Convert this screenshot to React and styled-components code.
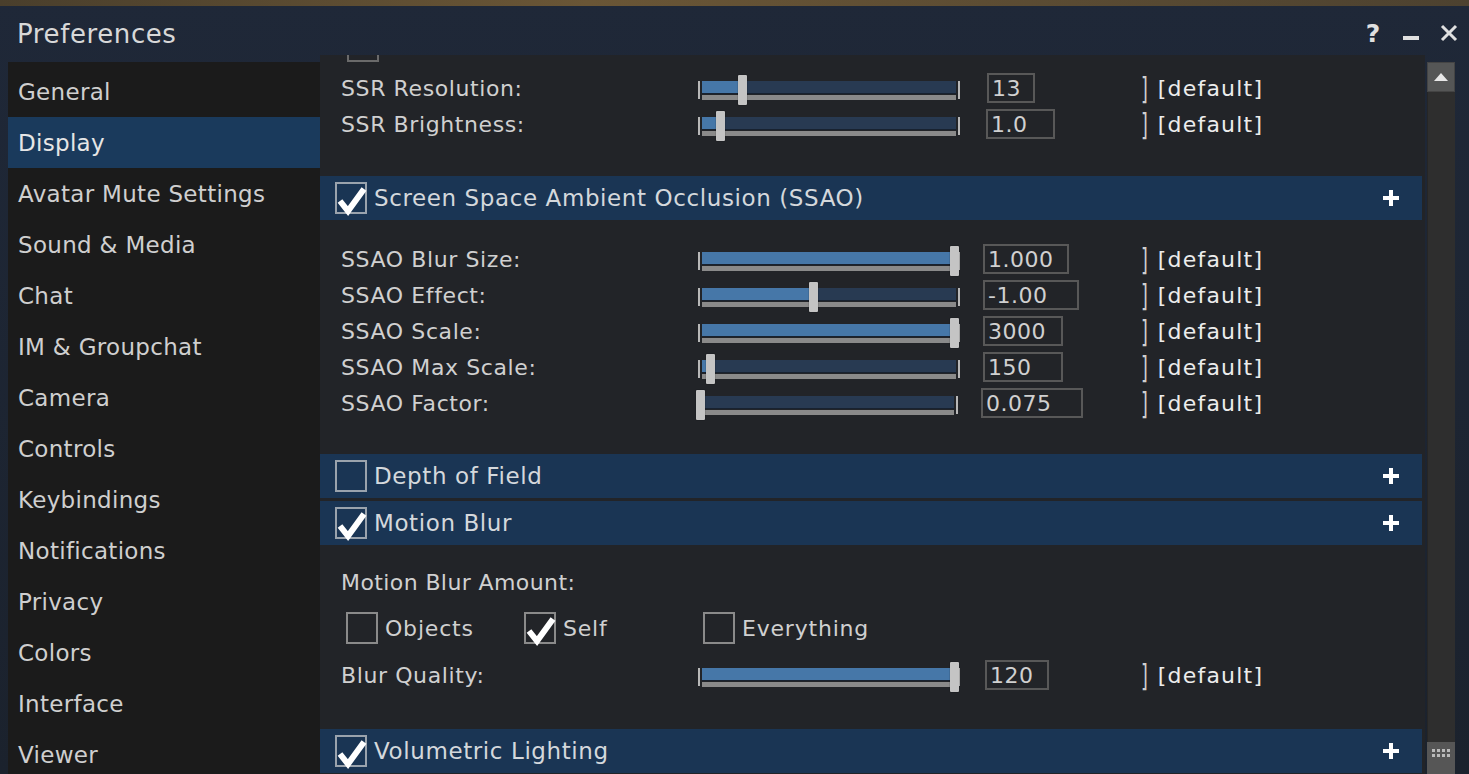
import React from "react";
import styled, { createGlobalStyle } from "styled-components";

const GlobalStyle = createGlobalStyle`
    html, body {
        margin: 0;
        padding: 0;
        background: #1d2430;
        overflow: hidden;
    }
    * {
        box-sizing: border-box;
    }
`;

const Window = styled.div`
    width: 1469px;
    height: 774px;
    display: flex;
    flex-direction: column;
    background: linear-gradient(180deg, #1f2838 0%, #1b222d 100%);
    font-family: "DejaVu Sans", "Liberation Sans", sans-serif;
    color: #d2d2d2;
    overflow: hidden;
`;

const TopStrip = styled.div`
    height: 6px;
    background: linear-gradient(90deg, #4a3f2c, #6a5636 40%, #4d4230);
    flex-shrink: 0;
`;

const TitleBar = styled.div`
    height: 54px;
    display: flex;
    align-items: center;
    padding: 0 0 0 17px;
    flex-shrink: 0;
`;

const Title = styled.div`
    font-size: 26px;
    letter-spacing: 0.6px;
    color: #d8d8d8;
    flex: 1;
    padding-top: 2px;
`;

const TitleButtons = styled.div`
    display: flex;
    align-items: center;
    gap: 14px;
    padding-right: 8px;
`;

const TitleButton = styled.div`
    width: 24px;
    height: 30px;
    display: flex;
    align-items: center;
    justify-content: center;
    color: #e0e0e0;
    font-weight: bold;
    font-size: 25px;
`;

const Body = styled.div`
    flex: 1;
    display: flex;
    padding-left: 8px;
    min-height: 0;
`;

const Sidebar = styled.div`
    width: 312px;
    background: #1b1b1b;
    padding-top: 4px;
    margin-top: 2px;
    display: flex;
    flex-direction: column;
`;

const NavItem = styled.div`
    height: 51px;
    flex-shrink: 0;
    display: flex;
    align-items: center;
    padding-left: 10px;
    font-size: 23px;
    letter-spacing: 0.3px;
    color: ${props => (props.active ? "#e6e6e6" : "#cfcfcf")};
    background: ${props => (props.active ? "#1a3a5c" : "transparent")};
`;

const Content = styled.div`
    flex: 1;
    background: #222428;
    overflow: hidden;
    margin-top: -5px;
`;

const Inner = styled.div`
    display: flex;
    flex-direction: column;
    padding-right: 3px;
`;

const Stub = styled.div`
    height: 17px;
    margin-left: 27px;
    width: 32px;
    border-left: 2px solid #6a6a6a;
    border-right: 2px solid #6a6a6a;
    border-bottom: 2px solid #6a6a6a;
    margin-top: -10px;
    margin-bottom: 8px;
    flex-shrink: 0;
`;

const Group = styled.div`
    display: flex;
    flex-direction: column;
    padding: ${props => props.pad || "0"};
`;

const Row = styled.div`
    height: 36px;
    display: flex;
    align-items: center;
    padding-left: 21px;
    margin-top: ${props => props.top || 0}px;
    flex-shrink: 0;
`;

const Label = styled.div`
    width: 357px;
    font-size: 22px;
    letter-spacing: 0.6px;
    color: #d0d0d0;
    flex-shrink: 0;
`;

const SliderWrap = styled.div`
    width: 264px;
    height: 32px;
    position: relative;
    flex-shrink: 0;
    align-self: flex-start;
    margin-top: 4px;
    margin-left: ${props => props.shift || 0}px;
`;

const Tick = styled.div`
    position: absolute;
    top: 7px;
    width: 2px;
    height: 18px;
    background: #b8b8b8;
    ${props => (props.end ? "right: 2px;" : "left: 0;")}
`;

const Track = styled.div`
    position: absolute;
    left: 4px;
    right: 6px;
    top: 7px;
    height: 13px;
    background: #283a52;
    border-bottom: 1px solid #182230;
`;

const Fill = styled.div`
    height: 100%;
    background: #4677a8;
`;

const Rail = styled.div`
    position: absolute;
    left: 4px;
    right: 6px;
    top: 21px;
    height: 5px;
    background: #8a8a8a;
`;

const Thumb = styled.div`
    position: absolute;
    top: 1px;
    width: 9px;
    height: 30px;
    margin-left: -4px;
    background: #c4c4c4;
    border-radius: 1px;
    box-shadow: 0 0 1px #000;
`;

const ValueBox = styled.div`
    width: ${props => props.w}px;
    height: 30px;
    margin-left: ${props => props.gap}px;
    border: 2px solid #585858;
    font-size: 22px;
    letter-spacing: 0.5px;
    color: #d0d0d0;
    padding-left: 3px;
    display: flex;
    align-items: center;
    flex-shrink: 0;
`;

const Default = styled.div`
    margin-left: auto;
    width: 282px;
    font-size: 22px;
    letter-spacing: 1.2px;
    color: #ececec;
    display: flex;
    align-items: center;
    flex-shrink: 0;
`;

const Bracket = styled.span`
    display: inline-block;
    font-size: 22px;
    color: #cfcfcf;
    margin-right: 8px;
    transform: scale(0.8, 1.35);
`;

const Header = styled.div`
    height: 44px;
    background: #1a3554;
    display: flex;
    align-items: center;
    padding: 0 21px 0 15px;
    margin-top: ${props => props.top || 0}px;
    flex-shrink: 0;
`;

const HeaderText = styled.div`
    flex: 1;
    font-size: 23px;
    letter-spacing: 0.6px;
    color: #d4d8dc;
    margin-left: 7px;
`;

const Box = styled.div`
    width: 32px;
    height: 32px;
    border: 2px solid ${props => props.border || "#9aa3ad"};
    position: relative;
    flex-shrink: 0;
`;

const CheckMark = styled.svg`
    position: absolute;
    left: -1px;
    top: 3px;
`;

const OptionRow = styled.div`
    height: 46px;
    display: flex;
    align-items: center;
    padding-left: 26px;
    flex-shrink: 0;
`;

const Option = styled.div`
    display: flex;
    align-items: center;
    width: ${props => props.w}px;
    font-size: 22px;
    letter-spacing: 0.8px;
    color: #d0d0d0;
    gap: 7px;
`;

const PlainLabel = styled.div`
    height: 46px;
    display: flex;
    align-items: center;
    padding-left: 21px;
    font-size: 22px;
    letter-spacing: 0.4px;
    color: #d0d0d0;
    flex-shrink: 0;
`;

const Scrollbar = styled.div`
    width: 28px;
    margin-left: 2px;
    display: flex;
    flex-direction: column;
    background: #2b2b2b;
    margin-top: 2px;
`;

const ScrollButton = styled.div`
    height: 30px;
    background: #555656;
    border: 1px solid #444;
    display: flex;
    align-items: center;
    justify-content: center;
`;

const ScrollTrack = styled.div`
    flex: 1;
    background: #2e2e2e;
    border-left: 1px solid #262626;
`;

const Grip = styled.div`
    height: 32px;
    background: #565656;
    display: flex;
    justify-content: center;
    padding-top: 6px;
`;

const RightEdge = styled.div`
    width: 14px;
`;

const nav = [
    "General",
    "Display",
    "Avatar Mute Settings",
    "Sound & Media",
    "Chat",
    "IM & Groupchat",
    "Camera",
    "Controls",
    "Keybindings",
    "Notifications",
    "Privacy",
    "Colors",
    "Interface",
    "Viewer"
];

const Check = ({ checked, border }) => (
    <Box border={border}>
        {checked && (
            <CheckMark width="32" height="30" viewBox="0 0 32 30">
                <path
                    d="M4 14 L12 24 L28 2"
                    fill="none"
                    stroke="#ffffff"
                    strokeWidth="6"
                    strokeLinecap="butt"
                    strokeLinejoin="miter"
                />
            </CheckMark>
        )}
    </Box>
);

const Plus = () => (
    <svg width="20" height="20" viewBox="0 0 20 20">
        <path d="M10 2 V18 M2 10 H18" stroke="#ffffff" strokeWidth="4" />
    </svg>
);

const Slider = ({ value, shift }) => (
    <SliderWrap shift={shift}>
        <Tick />
        <Track>
            <Fill style={{ width: `${value * 100}%` }} />
        </Track>
        <Rail />
        <Tick end />
        <Thumb style={{ left: `${4 + value * 252}px` }} />
    </SliderWrap>
);

const SettingRow = ({ label, value, text, w, gap = 24, shift = 0, top = 0 }) => (
    <Row top={top}>
        <Label>{label}</Label>
        <Slider value={value} shift={shift} />
        <ValueBox w={w} gap={gap}>{text}</ValueBox>
        <Default>
            <Bracket>]</Bracket>[default]
        </Default>
    </Row>
);

const SectionHeader = ({ title, checked, top }) => (
    <Header top={top}>
        <Check checked={checked} />
        <HeaderText>{title}</HeaderText>
        <Plus />
    </Header>
);

const App = () => (
    <>
        <GlobalStyle />
        <Window>
            <TopStrip />
            <TitleBar>
                <Title>Preferences</Title>
                <TitleButtons>
                    <TitleButton>?</TitleButton>
                    <TitleButton>
                        <svg width="18" height="20" viewBox="0 0 18 20">
                            <rect x="1" y="13" width="16" height="4" fill="#e0e0e0" />
                        </svg>
                    </TitleButton>
                    <TitleButton>
                        <svg width="20" height="20" viewBox="0 0 20 20">
                            <path d="M3 3 L17 17 M17 3 L3 17" stroke="#e0e0e0" strokeWidth="3" />
                        </svg>
                    </TitleButton>
                </TitleButtons>
            </TitleBar>
            <Body>
                <Sidebar>
                    {nav.map(item => (
                        <NavItem key={item} active={item === "Display"}>
                            {item}
                        </NavItem>
                    ))}
                </Sidebar>
                <Content>
                    <Inner>
                        <Stub />
                        <Group>
                            <SettingRow label="SSR Resolution:" value={0.16} text="13" w={48} gap={25} />
                            <SettingRow label="SSR Brightness:" value={0.07} text="1.0" w={69} gap={24} />
                        </Group>
                        <SectionHeader title="Screen Space Ambient Occlusion (SSAO)" checked top={34} />
                        <Group pad="21px 0 0 0">
                            <SettingRow label="SSAO Blur Size:" value={1} text="1.000" w={86} gap={21} />
                            <SettingRow label="SSAO Effect:" value={0.44} text="-1.00" w={96} gap={21} />
                            <SettingRow label="SSAO Scale:" value={1} text="3000" w={80} gap={21} />
                            <SettingRow label="SSAO Max Scale:" value={0.03} text="150" w={80} gap={21} />
                            <SettingRow label="SSAO Factor:" value={0} text="0.075" w={102} gap={21} shift={-2} />
                        </Group>
                        <SectionHeader title="Depth of Field" top={33} />
                        <SectionHeader title="Motion Blur" checked top={3} />
                        <Group pad="14px 0 0 0">
                            <PlainLabel>Motion Blur Amount:</PlainLabel>
                            <OptionRow>
                                <Option w={178}>
                                    <Check border="#8a8a8a" />
                                    Objects
                                </Option>
                                <Option w={179}>
                                    <Check checked border="#8a8a8a" />
                                    Self
                                </Option>
                                <Option w={200}>
                                    <Check border="#8a8a8a" />
                                    Everything
                                </Option>
                            </OptionRow>
                            <SettingRow label="Blur Quality:" value={1} text="120" w={64} gap={23} top={6} />
                        </Group>
                        <SectionHeader title="Volumetric Lighting" checked top={36} />
                    </Inner>
                </Content>
                <Scrollbar>
                    <ScrollButton>
                        <svg width="16" height="10" viewBox="0 0 16 10">
                            <path d="M1 9 L8 1 L15 9 Z" fill="#e8e8e8" />
                        </svg>
                    </ScrollButton>
                    <ScrollTrack />
                    <Grip>
                        <svg width="20" height="10" viewBox="0 0 20 10">
                            {[0, 1, 2, 3].map(i => (
                                <React.Fragment key={i}>
                                    <rect x={1 + i * 5} y="1" width="3" height="3" fill="#bbb" />
                                    <rect x={1 + i * 5} y="6" width="3" height="3" fill="#bbb" />
                                </React.Fragment>
                            ))}
                        </svg>
                    </Grip>
                </Scrollbar>
                <RightEdge />
            </Body>
        </Window>
    </>
);

export default App;
